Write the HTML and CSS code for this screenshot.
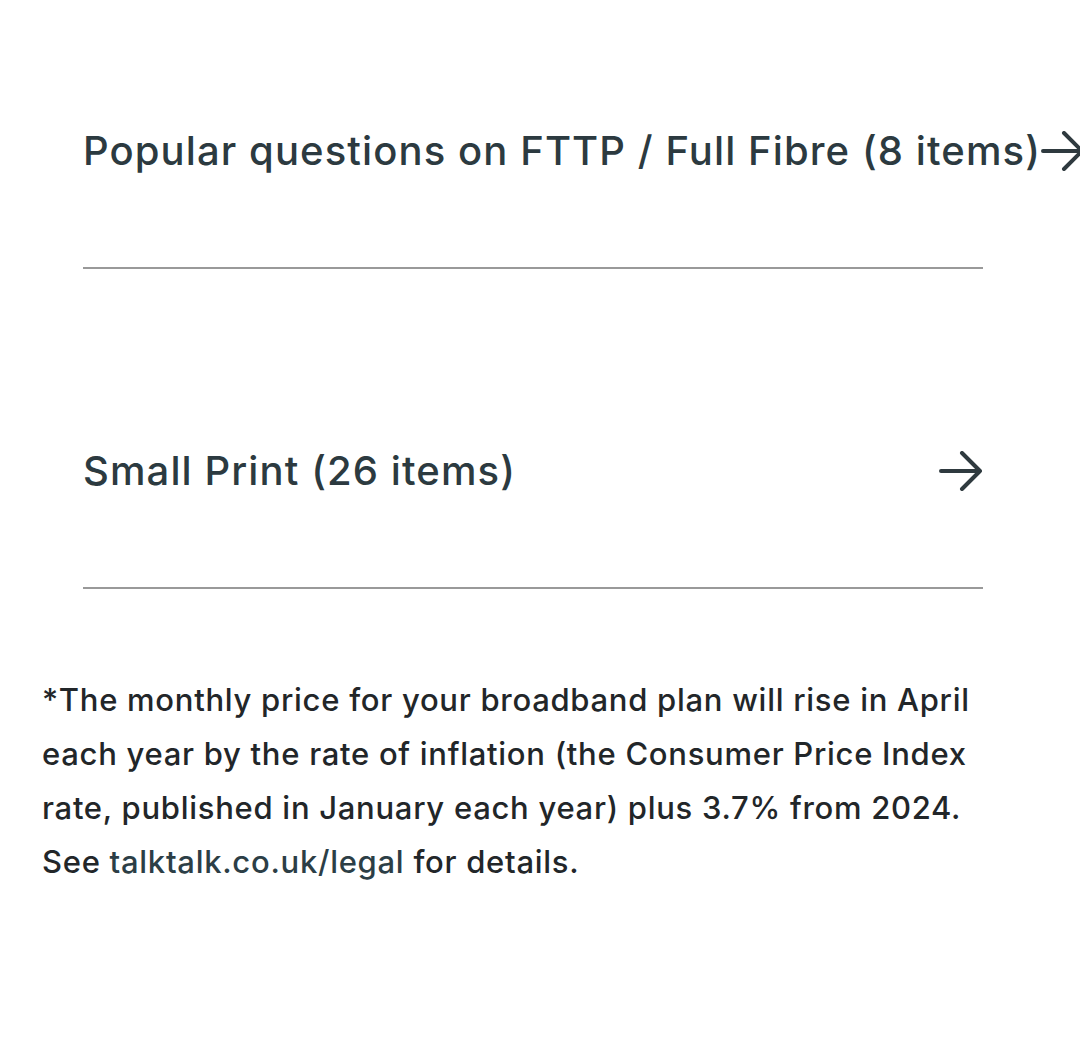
FILE: index.html
```html
<!DOCTYPE html>
<html lang="en">
<head>
<meta charset="utf-8">
<title>FAQ</title>
<link rel="stylesheet" href="styles.css">
</head>
<body>
<div class="page">
  <div class="accordion">
    <div class="row row-first">
      <span class="row-title">Popular questions on FTTP / Full Fibre (8 items)</span>
      <svg class="arrow" viewBox="0 0 44 40" width="44" height="40" aria-hidden="true"><path d="M2 20 H41 M23 2 L41 20 L23 38" fill="none" stroke="#2f3a3f" stroke-width="4" stroke-linecap="round" stroke-linejoin="round"/></svg>
    </div>
    <div class="row">
      <span class="row-title">Small Print (26 items)</span>
      <svg class="arrow" viewBox="0 0 44 40" width="44" height="40" aria-hidden="true"><path d="M2 20 H41 M23 2 L41 20 L23 38" fill="none" stroke="#2f3a3f" stroke-width="4" stroke-linecap="round" stroke-linejoin="round"/></svg>
    </div>
  </div>
  <p class="smallprint">*The monthly price for your broadband plan will rise in April each year by the rate of inflation (the Consumer Price Index rate, published in January each year) plus 3.7% from 2024. See <a class="link" href="#">talktalk.co.uk/legal</a> for details.</p>
</div>
</body>
</html>
```

FILE: styles.css
```css
html, body {
  margin: 0;
  padding: 0;
  background: #ffffff;
}
.page {
  width: 1080px;
  height: 1058px;
  overflow: hidden;
  font-family: "Inter", "Noto Sans", sans-serif;
}
.accordion {
  padding: 0 97px 0 83px;
}
.row {
  display: flex;
  align-items: center;
  justify-content: space-between;
  height: 48px;
  padding: 178px 0 92px;
  border-bottom: 2px solid #999999;
}
.row-first {
  padding-top: 127px;
}
.row-title {
  white-space: nowrap;
  font-size: 40px;
  font-weight: 500;
  line-height: 48px;
  color: #2c3a40;
  letter-spacing: 1.1px;
}
.arrow {
  flex: none;
  display: block;
}
.smallprint {
  margin: 84px 0 0;
  padding: 0 42px;
  max-width: 960px;
  font-size: 31px;
  font-weight: 500;
  line-height: 54px;
  color: #222629;
  letter-spacing: 0.72px;
}
.link {
  color: #2c3e46;
  text-decoration: none;
}
```
